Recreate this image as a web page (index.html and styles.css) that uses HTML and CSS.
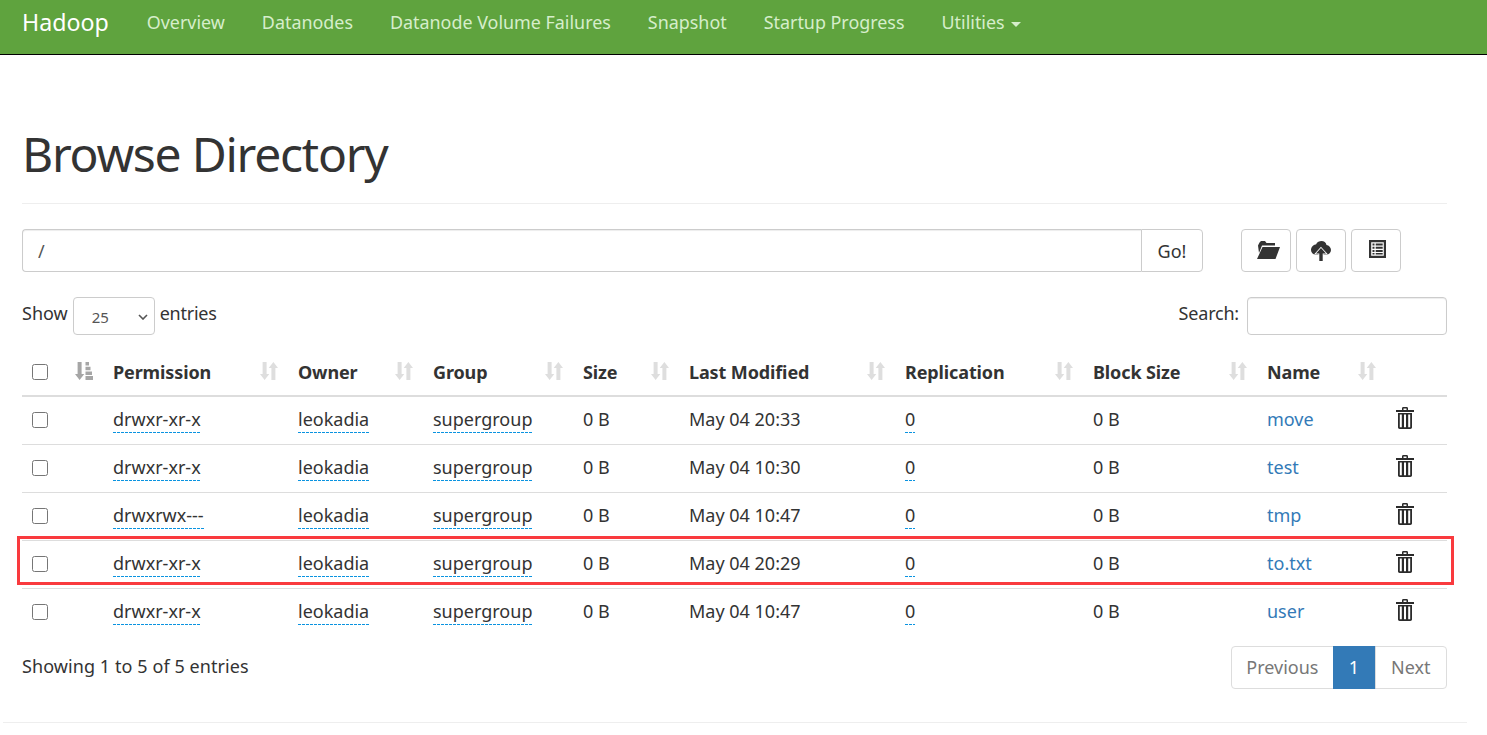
FILE: index.html
```html
<!DOCTYPE html>
<html lang="en">
<head>
<meta charset="utf-8">
<title>Browsing HDFS</title>
<link rel="stylesheet" href="styles.css">
</head>
<body>
<svg class="defs" width="0" height="0" aria-hidden="true">
  <defs>
    <symbol id="i-sort" viewBox="0 0 18 18"><path d="M2.600 0h4v12H9.300L4.600 18 0 12h2.600zM11.400 18h4V6H18L13.400 0 8.700 6h2.700z"/></symbol>
    <symbol id="i-sort-attr" viewBox="0 0 18 18"><path d="M2.600 0h4v12H9.300L4.600 18 0 12h2.600zM10.500 0h3.500v3.500h-3.500zM10.500 4.700h5v3.500h-5zM10.500 9.400h6.500v3.500h-6.500zM10.500 14h7.500v4h-7.500z"/></symbol>
    <symbol id="i-folder" viewBox="0 0 23 18"><path d="M1 4.500 2.500 1.500 4 0h4l1.500 2h8.500v2.500H5L2 12zM5.500 6h17.500L18.500 18H0z"/></symbol>
    <symbol id="i-cloud" viewBox="0 0 20 20"><path d="M5 3.500C6 .8 8.500 0 10.500 0c2.500 0 4.500 1.500 5 4C18 4.300 20 6.500 20 9c0 2.500-2 4.500-4.500 4.500h-11C2 13.500 0 11.500 0 9c0-2.800 2.300-5.500 5-5.500z"/><path class="cloud-arrow" d="M10 7l5 5.500h-3.300V20H8.300v-7.500H5z"/></symbol>
    <symbol id="i-list" viewBox="0 0 17 18"><path fill-rule="evenodd" d="M0 0h17v18H0zM2.200 2.200v13.600h12.600V2.200z"/><path d="M3.500 3.500h2v2h-2zM6.700 3.500h7v2h-7zM3.500 6.800h2v2h-2zM6.700 6.800h7v2h-7zM3.500 10h2v2h-2zM6.700 10h7v2h-7zM3.500 13h2v1.500h-2zM6.700 13h7v1.500h-7z"/></symbol>
    <symbol id="i-trash" viewBox="0 0 18 22"><path d="M0 3h6V1.300C6 .6 6.600 0 7.300 0h3.400C11.400 0 12 .6 12 1.300V3h6v2H0zM7.500 1.500V3h3V1.500z"/><path fill-rule="evenodd" d="M2 6h14v14.300c0 1-.7 1.700-1.700 1.700H3.700C2.700 22 2 21.300 2 20.300zM3.800 7.500v12.800h2V7.500zM8 7.500v12.800h2V7.500zM12.200 7.500v12.800h2V7.500z"/></symbol>
  </defs>
</svg>

<nav class="navbar">
  <a class="brand" href="#">Hadoop</a>
  <ul class="nav">
    <li><a href="#">Overview</a></li>
    <li><a href="#">Datanodes</a></li>
    <li><a href="#">Datanode Volume Failures</a></li>
    <li><a href="#">Snapshot</a></li>
    <li><a href="#">Startup Progress</a></li>
    <li><a href="#">Utilities <span class="caret"></span></a></li>
  </ul>
</nav>

<main class="container">
  <div class="page-header"><h1>Browse Directory</h1></div>

  <div class="path-row">
    <div class="input-group">
      <input class="path-input" type="text" value="/">
      <button class="go" type="button">Go!</button>
    </div>
    <div class="tools">
      <button class="tool" type="button"><svg class="t-folder"><use href="#i-folder"/></svg></button>
      <button class="tool" type="button"><svg class="t-cloud"><use href="#i-cloud"/></svg></button>
      <button class="tool" type="button"><svg class="t-list"><use href="#i-list"/></svg></button>
    </div>
  </div>

  <div class="dt-top">
    <label class="dt-length">Show
      <span class="select-wrap">
        <select class="dt-select"><option>25</option></select>
        <svg class="chevron" viewBox="0 0 10 6"><path d="M1 1l4 4 4-4"/></svg>
      </span>
      <span class="entries-label">entries</span></label>
    <label class="dt-search"><span class="search-label">Search:</span> <input class="search-input" type="search"></label>
  </div>

  <table class="table">
    <colgroup>
      <col class="c-check"><col class="c-sort"><col class="c-perm"><col class="c-owner"><col class="c-group"><col class="c-size"><col class="c-mod"><col class="c-rep"><col class="c-block"><col class="c-name"><col class="c-del">
    </colgroup>
    <thead>
      <tr>
        <th><input class="check" type="checkbox"></th>
        <th><svg class="sort sort-active"><use href="#i-sort-attr"/></svg></th>
        <th><div class="th-in">Permission<svg class="sort"><use href="#i-sort"/></svg></div></th>
        <th><div class="th-in">Owner<svg class="sort"><use href="#i-sort"/></svg></div></th>
        <th><div class="th-in">Group<svg class="sort"><use href="#i-sort"/></svg></div></th>
        <th><div class="th-in">Size<svg class="sort"><use href="#i-sort"/></svg></div></th>
        <th><div class="th-in">Last Modified<svg class="sort"><use href="#i-sort"/></svg></div></th>
        <th><div class="th-in">Replication<svg class="sort"><use href="#i-sort"/></svg></div></th>
        <th><div class="th-in">Block Size<svg class="sort"><use href="#i-sort"/></svg></div></th>
        <th><div class="th-in">Name<svg class="sort"><use href="#i-sort"/></svg></div></th>
        <th></th>
      </tr>
    </thead>
    <tbody>
      <tr>
        <td><input class="check" type="checkbox"></td><td></td>
        <td><span class="dash">drwxr-xr-x</span></td><td><span class="dash">leokadia</span></td><td><span class="dash">supergroup</span></td>
        <td>0 B</td><td>May 04 20:33</td><td><span class="dash">0</span></td><td>0 B</td>
        <td><a class="link" href="#">move</a></td><td><svg class="trash"><use href="#i-trash"/></svg></td>
      </tr>
      <tr>
        <td><input class="check" type="checkbox"></td><td></td>
        <td><span class="dash">drwxr-xr-x</span></td><td><span class="dash">leokadia</span></td><td><span class="dash">supergroup</span></td>
        <td>0 B</td><td>May 04 10:30</td><td><span class="dash">0</span></td><td>0 B</td>
        <td><a class="link" href="#">test</a></td><td><svg class="trash"><use href="#i-trash"/></svg></td>
      </tr>
      <tr>
        <td><input class="check" type="checkbox"></td><td></td>
        <td><span class="dash">drwxrwx---</span></td><td><span class="dash">leokadia</span></td><td><span class="dash">supergroup</span></td>
        <td>0 B</td><td>May 04 10:47</td><td><span class="dash">0</span></td><td>0 B</td>
        <td><a class="link" href="#">tmp</a></td><td><svg class="trash"><use href="#i-trash"/></svg></td>
      </tr>
      <tr>
        <td><input class="check" type="checkbox"></td><td></td>
        <td><span class="dash">drwxr-xr-x</span></td><td><span class="dash">leokadia</span></td><td><span class="dash">supergroup</span></td>
        <td>0 B</td><td>May 04 20:29</td><td><span class="dash">0</span></td><td>0 B</td>
        <td><a class="link" href="#">to.txt</a></td><td><svg class="trash"><use href="#i-trash"/></svg></td>
      </tr>
      <tr>
        <td><input class="check" type="checkbox"></td><td></td>
        <td><span class="dash">drwxr-xr-x</span></td><td><span class="dash">leokadia</span></td><td><span class="dash">supergroup</span></td>
        <td>0 B</td><td>May 04 10:47</td><td><span class="dash">0</span></td><td>0 B</td>
        <td><a class="link" href="#">user</a></td><td><svg class="trash"><use href="#i-trash"/></svg></td>
      </tr>
    </tbody>
  </table>

  <div class="dt-bottom">
    <div class="dt-info">Showing 1 to 5 of 5 entries</div>
    <div class="pagination">
      <a class="page" href="#">Previous</a><a class="page current" href="#">1</a><a class="page" href="#">Next</a>
    </div>
  </div>
  <hr class="foot">
  <div class="highlight"></div>
</main>
</body>
</html>
```
FILE: styles.css
```css
* { box-sizing: border-box; }
html, body { margin: 0; padding: 0; height: 735px; overflow: hidden; }
body {
  font-family: "Noto Sans", "Open Sans", sans-serif;
  font-size: 18px;
  line-height: 24px;
  color: #333;
  background: #fff;
}
a { text-decoration: none; }
.defs { position: absolute; }

.navbar {
  display: flex;
  align-items: flex-start;
  height: 55px;
  padding-left: 22px;
  background: #5fa33e;
  border-bottom: 1px solid #000;
}
.brand { font-size: 23.2px; line-height: 45px; color: #fff; margin-right: 19.5px; }
.nav { display: flex; list-style: none; margin: 0; padding: 0; }
.nav a { display: block; padding: 0 18.5px; font-size: 17.9px; line-height: 44px; color: #d6eecb; }
.caret {
  display: inline-block;
  width: 0; height: 0;
  margin-left: 2px;
  vertical-align: middle;
  border-top: 5px solid #d6eecb;
  border-left: 5px solid transparent;
  border-right: 5px solid transparent;
}

.container { position: relative; padding: 0 40px 0 22px; }
.page-header { height: 149px; padding-top: 68px; border-bottom: 1px solid #eee; }
.page-header h1 { margin: 0; font-size: 48px; line-height: 62px; font-weight: 400; letter-spacing: -1.25px; color: #333; }

.path-row { display: flex; justify-content: space-between; margin-top: 25px; padding-right: 46px; }
.input-group { display: flex; width: 1181px; height: 43px; }
.path-input {
  flex: 1;
  min-width: 0;
  height: 43px;
  padding: 0 15px;
  font: inherit;
  color: #555;
  border: 1px solid #ccc;
  border-right: 0;
  border-radius: 4px 0 0 4px;
  box-shadow: inset 0 1px 1px rgba(0,0,0,.075);
}
.go {
  width: 62px;
  height: 43px;
  padding: 0;
  font: inherit;
  color: #333;
  background: #fff;
  border: 1px solid #ccc;
  border-radius: 0 4px 4px 0;
}
.tools { display: flex; gap: 5px; }
.tool {
  display: flex;
  align-items: center;
  justify-content: center;
  width: 50px;
  height: 43px;
  padding: 0;
  background: #fff;
  border: 1px solid #ccc;
  border-radius: 4px;
  fill: #333;
}
.t-folder { width: 23px; height: 18px; margin: 0 0 2px 4px; }
.t-cloud { width: 20px; height: 20px; }
.t-list { width: 17px; height: 18px; margin: 0 0 3px 3px; }
.cloud-arrow { stroke: #fff; stroke-width: 1.6px; paint-order: stroke; }

.dt-top { display: flex; justify-content: space-between; align-items: flex-start; margin-top: 25px; height: 39px; }
.dt-length { display: flex; align-items: flex-start; gap: 5px; line-height: 32px; }
.entries-label { letter-spacing: -.25px; }
.select-wrap { position: relative; display: block; width: 82px; height: 38px; }
.dt-select {
  display: block;
  width: 82px;
  height: 38px;
  padding: 2px 14px 0 18px;
  font-family: inherit;
  font-size: 15px;
  color: #555;
  background: #fff;
  border: 1px solid #ccc;
  border-radius: 4px;
  appearance: none;
}
.chevron {
  position: absolute;
  left: 65px;
  top: 17px;
  width: 10px;
  height: 6px;
  fill: none;
  stroke: #555;
  stroke-width: 1.6px;
  pointer-events: none;
}
.dt-search { display: flex; align-items: flex-start; gap: 8px; line-height: 32px; }
.search-label { letter-spacing: -.2px; }
.search-input { width: 200px; height: 38px; border: 1px solid #ccc; border-radius: 4px; box-shadow: inset 0 1px 1px rgba(0,0,0,.075); }

.table { width: 1425px; table-layout: fixed; border-collapse: collapse; margin-top: 12px; }
.c-check { width: 45px; } .c-sort { width: 38px; } .c-perm { width: 185px; } .c-owner { width: 135px; }
.c-group { width: 150px; } .c-size { width: 106px; } .c-mod { width: 216px; } .c-rep { width: 188px; }
.c-block { width: 174px; } .c-name { width: 129px; } .c-del { width: 59px; }
.table th, .table td { padding: 0 8px; height: 48px; text-align: left; vertical-align: middle; }
.table th { font-weight: 700; letter-spacing: -.12px; border-bottom: 2px solid #ddd; }
.table td { border-top: 1px solid #ddd; }
.table td + td { padding-bottom: 2px; }
.table tbody tr:first-child td { border-top: 0; }
.th-in { display: flex; justify-content: space-between; align-items: center; padding-right: 4px; }
.sort { display: block; width: 18px; height: 18px; margin-bottom: 2px; fill: #dedede; flex: none; }
.sort-active { fill: #a6a6a6; }
.check { display: block; width: 16px; height: 16px; margin: 0 0 0 2px; }
.dash {
  display: inline-block;
  line-height: 21px;
  padding-bottom: 3px;
  margin-bottom: -3px;
  background: repeating-linear-gradient(to right, #0a93e0 0 3px, transparent 3px 4px) left bottom / 100% 1px no-repeat;
}
.link { color: #337ab7; }
.trash { display: block; width: 18px; height: 22px; margin-bottom: 2px; fill: #2b2b2b; }

.dt-bottom { display: flex; justify-content: space-between; align-items: flex-start; margin-top: 10px; }
.dt-info { padding-top: 8px; letter-spacing: .08px; }
.pagination { display: flex; }
.page {
  height: 43px;
  padding: 0 14px;
  line-height: 41px;
  color: #777;
  background: #fff;
  border: 1px solid #ddd;
  margin-left: -1px;
}
.page:first-child { border-radius: 4px 0 0 4px; }
.page:last-child { padding: 0 15.5px; border-radius: 0 4px 4px 0; }
.page.current { width: 43px; padding: 0; text-align: center; color: #fff; background: #337ab7; border-color: #337ab7; }
.foot { position: absolute; left: 3px; top: 667px; width: 1464px; margin: 0; border: 0; border-top: 1px solid #eee; }
.highlight { position: absolute; left: 17px; top: 481px; width: 1437px; height: 49px; border: 3px solid #f93a3e; pointer-events: none; }
```
